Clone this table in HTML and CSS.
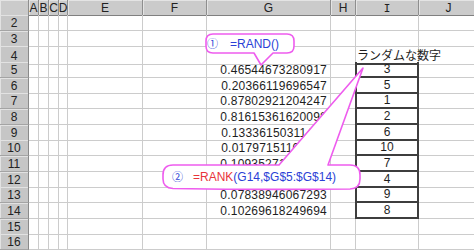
FILE: index.html
```html
<!DOCTYPE html>
<html lang="ja">
<head>
<meta charset="utf-8">
<title>RAND / RANK</title>
<link rel="stylesheet" href="styles.css">
</head>
<body>
<div class="sheet">
  <div class="row hdr"><div class="corner"></div><div>A</div><div>B</div><div>C</div><div>D</div><div>E</div><div>F</div><div>G</div><div>H</div><div class="serif">I</div><div>J</div></div>
  <div class="row"><div class="rh">2</div><div></div><div></div><div></div><div></div><div></div><div></div><div></div><div></div><div></div><div></div></div>
  <div class="row"><div class="rh">3</div><div></div><div></div><div></div><div></div><div></div><div></div><div></div><div></div><div></div><div></div></div>
  <div class="row"><div class="rh">4</div><div></div><div></div><div></div><div></div><div></div><div></div><div></div><div></div><div class="lbl top">ランダムな数字</div><div></div></div>
  <div class="row"><div class="rh">5</div><div></div><div></div><div></div><div></div><div></div><div></div><div class="g">0.46544673280917</div><div></div><div class="box">3</div><div></div></div>
  <div class="row"><div class="rh">6</div><div></div><div></div><div></div><div></div><div></div><div></div><div class="g">0.20366119696547</div><div></div><div class="box">5</div><div></div></div>
  <div class="row"><div class="rh">7</div><div></div><div></div><div></div><div></div><div></div><div></div><div class="g">0.87802921204247</div><div></div><div class="box">1</div><div></div></div>
  <div class="row"><div class="rh">8</div><div></div><div></div><div></div><div></div><div></div><div></div><div class="g">0.81615361620098</div><div></div><div class="box">2</div><div></div></div>
  <div class="row"><div class="rh">9</div><div></div><div></div><div></div><div></div><div></div><div></div><div class="g">0.13336150311482</div><div></div><div class="box">6</div><div></div></div>
  <div class="row"><div class="rh">10</div><div></div><div></div><div></div><div></div><div></div><div></div><div class="g">0.01797151104637</div><div></div><div class="box">10</div><div></div></div>
  <div class="row"><div class="rh">11</div><div></div><div></div><div></div><div></div><div></div><div></div><div class="g">0.10935271864059</div><div></div><div class="box">7</div><div></div></div>
  <div class="row"><div class="rh">12</div><div></div><div></div><div></div><div></div><div></div><div></div><div class="g"></div><div></div><div class="box">4</div><div></div></div>
  <div class="row"><div class="rh">13</div><div></div><div></div><div></div><div></div><div></div><div></div><div class="g">0.07838946067293</div><div></div><div class="box">9</div><div></div></div>
  <div class="row"><div class="rh">14</div><div></div><div></div><div></div><div></div><div></div><div></div><div class="g">0.10269618249694</div><div></div><div class="box">8</div><div></div></div>
  <div class="row"><div class="rh">15</div><div></div><div></div><div></div><div></div><div></div><div></div><div></div><div></div><div></div><div></div></div>
  <div class="row"><div class="rh">16</div><div></div><div></div><div></div><div></div><div></div><div></div><div></div><div></div><div></div><div></div></div>
</div>

<svg class="overlay" width="474" height="251" viewBox="0 0 474 251">
  <path class="callout" d="M213,34 H287 Q294,34 294,41 V46 Q294,53 287,53 H273 L261,65 L254,53 H213 Q206,53 206,46 V41 Q206,34 213,34 Z"/>
  <text class="circ" x="207" y="47.5">①</text>
  <text class="ftext blue" x="230" y="47.5">=RAND()</text>

  <path class="callout" d="M173,165 H279 L363,68 L328,165 H350 Q360,165 360,175 V179 Q360,188.5 350,189 Q260,190 173,188.5 Q163,188 163,179 V175 Q163,165 173,165 Z"/>
  <text class="circ" x="172" y="181">②</text>
  <text class="ftext" x="193" y="181"><tspan class="red">=RANK</tspan><tspan class="blue">(G14,$G$5:$G$14)</tspan></text>
</svg>
</body>
</html>
```
FILE: styles.css
```css
* { box-sizing: border-box; }

body {
  margin: 0;
  width: 474px;
  height: 251px;
  overflow: hidden;
  position: relative;
  background: #fff;
  font-family: "Liberation Sans", Arial, sans-serif;
  font-size: 12px;
  color: #1e1e1e;
}

.sheet {
  display: flex;
  flex-direction: column;
}

.row {
  display: grid;
  grid-template-columns: 29px 10px 10px 10px 9px 75px 64px 124px 25px 63px 60px;
  height: 15.67px;
  flex: none;
}

.row > div {
  display: flex;
  align-items: center;
  white-space: nowrap;
  border-right: 1px solid #cccccc;
  border-bottom: 1px solid #cccccc;
  min-width: 0;
}

.hdr {
  height: 15px;
  background: #cbcbcb;
}

.hdr > div {
  justify-content: center;
  border-right-color: #8e8e8e;
  border-bottom-color: #808080;
  box-shadow: inset 1px 1px 0 #e4e4e4;
  color: #222;
  padding-top: 1px;
}

.hdr .serif { font-family: "DejaVu Sans Mono", monospace; font-size: 11px; }

.rh {
  justify-content: center;
  background: #c6c6c6;
  box-shadow: inset 1px 1px 0 #e2e2e2;
  border-right-color: #8a8a8a !important;
  border-bottom-color: #a4a4a4 !important;
  color: #222;
  padding-top: 1px;
}

.g {
  justify-content: flex-end;
  padding-right: 3px;
  padding-top: 1px;
  letter-spacing: 0.2px;
}

.lbl {
  padding-left: 1px;
  font-family: "Noto Sans CJK JP", sans-serif;
  font-size: 12px;
  overflow: visible;
}

.row > .top { border-bottom: 2px solid #3e3e3e; }

.row > .box {
  justify-content: center;
  border-left: 2px solid #3e3e3e;
  border-right: 2px solid #3e3e3e;
  border-bottom: 2px solid #3e3e3e;
  margin-left: -1px;
}

.overlay {
  position: absolute;
  top: 0;
  left: 0;
  pointer-events: none;
}

.callout {
  fill: #fff;
  stroke: #ee5cee;
  stroke-width: 1.6;
  stroke-linejoin: round;
}

.circ {
  font-family: "Noto Sans CJK JP", sans-serif;
  font-size: 11px;
  fill: #2b3fd6;
}

.ftext {
  font-family: "Liberation Sans", Arial, sans-serif;
  font-size: 12px;
}

.blue { fill: #2b3fd6; }
.red { fill: #e8343a; }
```
